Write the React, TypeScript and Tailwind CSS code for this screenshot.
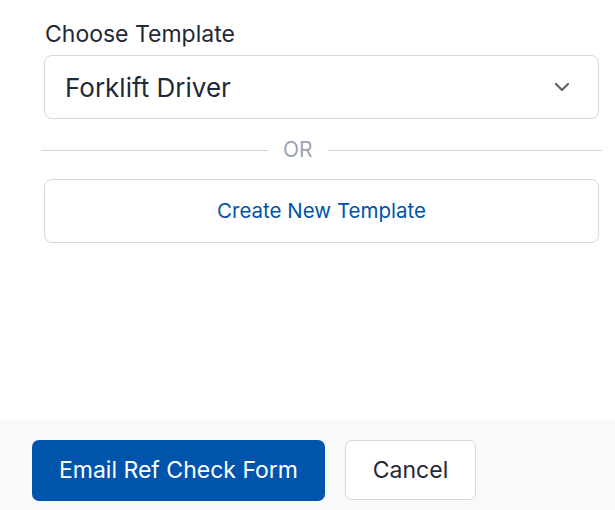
import React from 'react';

const ChevronDown: React.FC<{ className?: string }> = ({ className }) => (
  <svg viewBox="0 0 20 20" fill="none" stroke="currentColor" strokeWidth={2.2} strokeLinecap="round" strokeLinejoin="round" className={className}>
    <path d="M4 7l6 6 6-6" />
  </svg>
);

export default function App() {
  return (
    <div className="flex h-[510px] w-[615px] flex-col overflow-hidden bg-white font-['Inter',sans-serif]">
      <div className="flex-1 pl-[41px] pr-[13px] pt-[18px]">
        <label className="ml-[4px] block text-[23px] leading-[32px] text-[#1f2937]">Choose Template</label>
        <div className="mx-[3px] mt-[5px] flex h-[64px] items-center justify-between rounded-[8px] border border-[#d4d7dd] bg-white pl-[20px] pr-[26px]">
          <span className="text-[26px] text-[#1f2937]">Forklift Driver</span>
          <ChevronDown className="h-[20px] w-[20px] text-[#5b6472]" />
        </div>
        <div className="mt-[19px] flex items-center gap-[15px]">
          <div className="h-px w-[227px] bg-[#d1d5db]" />
          <span className="text-[21px] leading-[24px] text-[#9ca3af]">OR</span>
          <div className="h-px flex-1 bg-[#d1d5db]" />
        </div>
        <button className="mx-[3px] mt-[17px] flex h-[64px] w-[calc(100%-6px)] items-center justify-center rounded-[8px] border border-[#d4d7dd] bg-white text-[20.5px] text-[#0054a6]">
          Create New Template
        </button>
      </div>
      <div className="flex h-[90px] shrink-0 gap-[20px] bg-[#f8f9fb] px-[32px] pt-[20px]">
        <button className="h-[61px] w-[293px] rounded-[7px] bg-[#0054ac] text-[23px] text-white">Email Ref Check Form</button>
        <button className="h-[60px] w-[131px] rounded-[7px] border border-[#d4d7dd] bg-white text-[23px] text-[#1f2937]">Cancel</button>
      </div>
    </div>
  );
}
